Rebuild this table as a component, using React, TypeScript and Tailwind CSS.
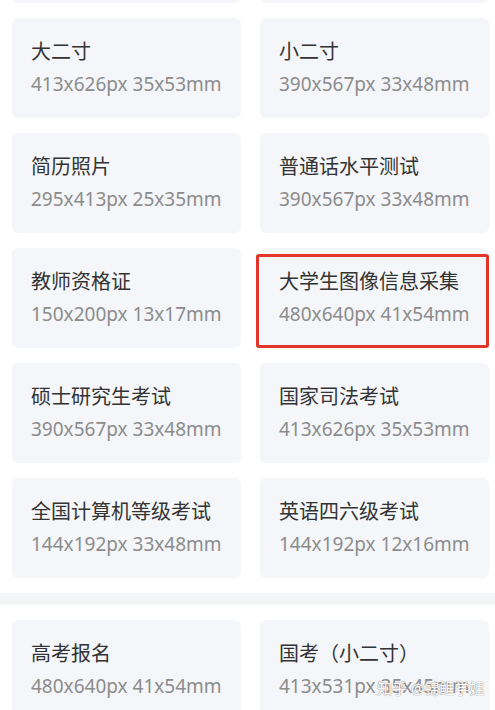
import React from 'react';

type Spec = { name: string; size: string; marked?: boolean };

const topSpecs: Spec[] = [
  { name: '', size: '' },
  { name: '', size: '' },
  { name: '大二寸', size: '413x626px 35x53mm' },
  { name: '小二寸', size: '390x567px 33x48mm' },
  { name: '简历照片', size: '295x413px 25x35mm' },
  { name: '普通话水平测试', size: '390x567px 33x48mm' },
  { name: '教师资格证', size: '150x200px 13x17mm' },
  { name: '大学生图像信息采集', size: '480x640px 41x54mm', marked: true },
  { name: '硕士研究生考试', size: '390x567px 33x48mm' },
  { name: '国家司法考试', size: '413x626px 35x53mm' },
  { name: '全国计算机等级考试', size: '144x192px 33x48mm' },
  { name: '英语四六级考试', size: '144x192px 12x16mm' },
];

const examSpecs: Spec[] = [
  { name: '高考报名', size: '480x640px 41x54mm' },
  { name: '国考（小二寸）', size: '413x531px 35x45mm' },
];

const font = { fontFamily: '"Noto Sans", "Noto Sans CJK SC", sans-serif' };

function SpecCard({ spec }: { spec: Spec }) {
  return (
    <div className="relative h-[100px] rounded-md bg-[#f4f6f9] pl-[19px] flex flex-col justify-center">
      {spec.name && <div className="text-[20px] leading-[33px] text-[#333333]">{spec.name}</div>}
      {spec.size && <div className="text-[19px] leading-[33px] text-[#8c8c8c]">{spec.size}</div>}
      {spec.marked && (
        <div className="absolute left-[-4px] top-[6px] w-[233px] h-[94px] border-[3px] border-[#e3342a] rounded-[3px]" />
      )}
    </div>
  );
}

export default function App() {
  return (
    <div className="relative w-[495px] h-[710px] overflow-hidden bg-white" style={font}>
      <div className="-mt-[97px] px-3 grid grid-cols-[229px_229px] gap-x-[19px] gap-y-[15px]">
        {topSpecs.map((s, i) => (
          <SpecCard key={i} spec={s} />
        ))}
      </div>

      <div className="mt-[15px] h-[12px] bg-[#f4f5f7]" />

      <div className="mt-[15px] px-3 grid grid-cols-[229px_229px] gap-x-[19px] gap-y-[15px]">
        {examSpecs.map((s) => (
          <SpecCard key={s.name} spec={s} />
        ))}
      </div>

      {/* watermark */}
      <div
        className="absolute left-[377px] top-[679px] whitespace-nowrap text-[15px] leading-[18px] text-white"
        style={{ textShadow: '0 0 1px #8a8a8a, 0 0 1px #8a8a8a' }}
      >
        知乎 @锦鲤学姐
      </div>
    </div>
  );
}
